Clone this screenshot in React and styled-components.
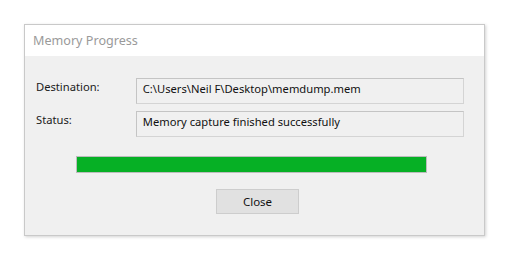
import React from "react";
import styled, { createGlobalStyle } from "styled-components";

const Global = createGlobalStyle`
  html, body {
    margin: 0;
    padding: 0;
    background: #ffffff;
  }
  body {
    font-family: "Noto Sans", "Open Sans", sans-serif;
  }
`;

const Page = styled.div`
  width: 512px;
  height: 260px;
  padding: 24px 0 0 24px;
  box-sizing: border-box;
`;

const Window = styled.div`
  width: 461px;
  height: 212px;
  box-sizing: border-box;
  border: 1px solid #c9c9c9;
  box-shadow: 1px 1px 3px rgba(0, 0, 0, 0.18);
  background: #f0f0f0;
  display: flex;
  flex-direction: column;
`;

const TitleBar = styled.div`
  height: 31px;
  background: #ffffff;
  display: flex;
  align-items: center;
  padding-left: 8px;
  font-size: 12.6px;
  color: #9a9a9a;
`;

const Body = styled.div`
  padding: 22px 20px 0 10px;
  display: flex;
  flex-direction: column;
`;

const Row = styled.div`
  display: flex;
  align-items: flex-start;
  margin-bottom: 7px;
`;

const Label = styled.div`
  width: 100px;
  font-size: 11.2px;
  color: #1a1a1a;
  padding-top: 1px;
  padding-left: 1px;
`;

const Field = styled.div`
  width: 329px;
  height: 26px;
  box-sizing: border-box;
  border: 1px solid #d4d4d4;
  border-top-color: #c4c4c4;
  border-left-color: #c4c4c4;
  background: #f0f0f0;
  font-size: 11.2px;
  color: #111;
  padding: 2px 0 0 6px;
`;

const Bar = styled.div`
  width: 351px;
  height: 17px;
  box-sizing: border-box;
  margin: 12px 0 0 41px;
  border: 1px solid #bcbcbc;
  background: #e6e6e6;
`;

const Fill = styled.div`
  height: 100%;
  background: #06b025;
`;

const Button = styled.button`
  width: 83px;
  height: 25px;
  margin: 16px 0 0 181px;
  box-sizing: border-box;
  border: 1px solid #cdcdcd;
  background: #e1e1e1;
  font-family: "Noto Sans", "Open Sans", sans-serif;
  font-size: 11.5px;
  color: #111;
  padding: 0;
`;

const App = () => {
  const progress = 100;
  return (
    <Page>
      <Global />
      <Window>
        <TitleBar>Memory Progress</TitleBar>
        <Body>
          <Row>
            <Label>Destination:</Label>
            <Field>C:\Users\Neil F\Desktop\memdump.mem</Field>
          </Row>
          <Row>
            <Label>Status:</Label>
            <Field>Memory capture finished successfully</Field>
          </Row>
          <Bar>
            <Fill style={{ width: `${progress}%` }} />
          </Bar>
          <Button>Close</Button>
        </Body>
      </Window>
    </Page>
  );
};

export default App;
